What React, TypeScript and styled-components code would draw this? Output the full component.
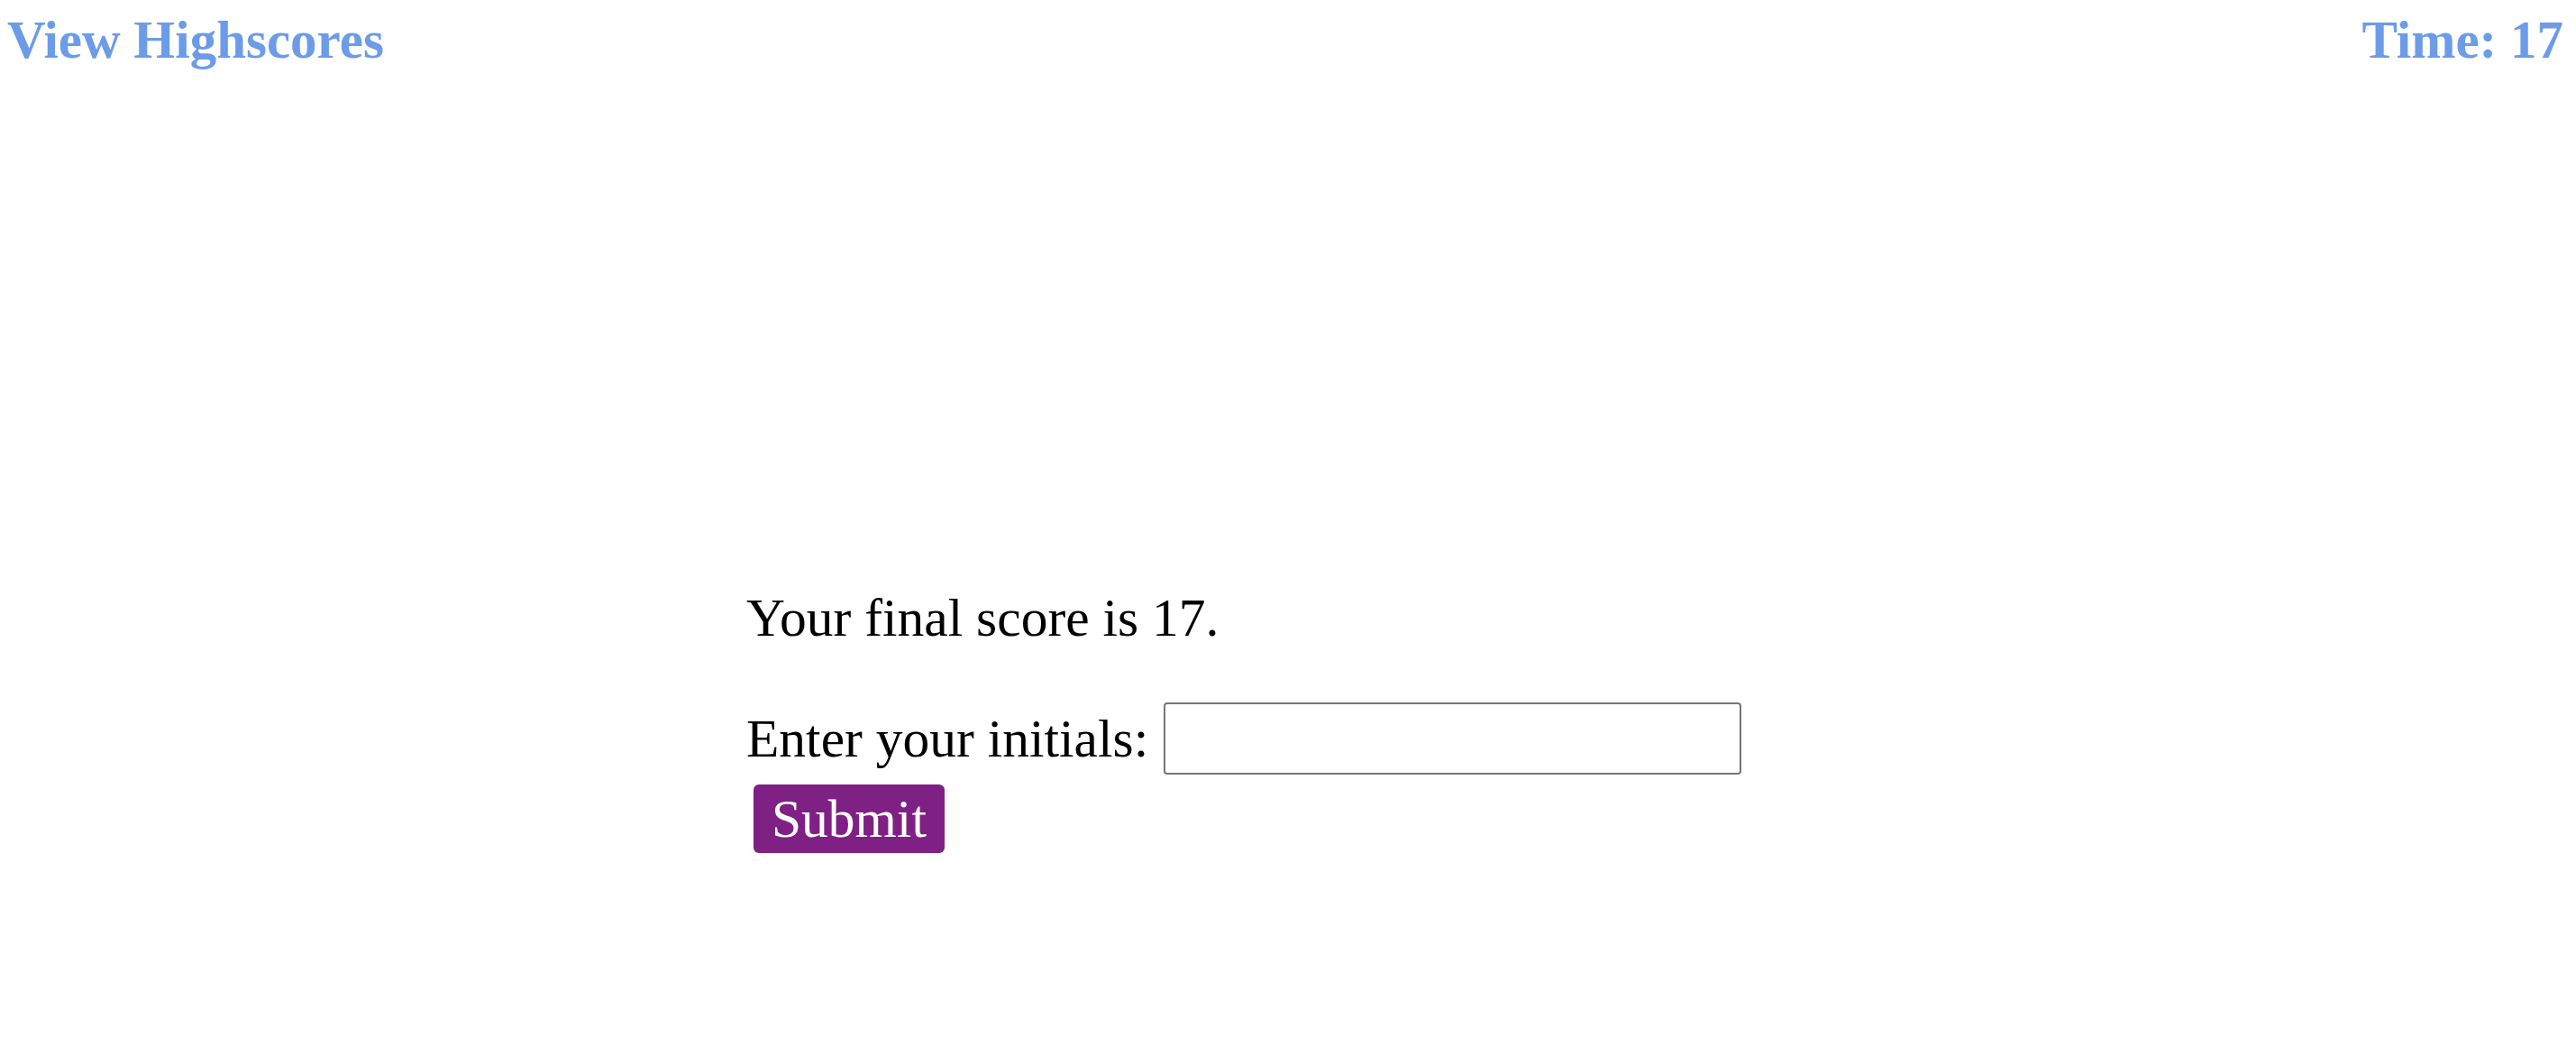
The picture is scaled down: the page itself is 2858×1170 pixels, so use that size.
import React from 'react';
import styled, { createGlobalStyle } from 'styled-components';

const GlobalStyle = createGlobalStyle`
  html, body {
    margin: 0;
    padding: 0;
    background: #ffffff;
  }
  body {
    font-family: "Liberation Serif", "Times New Roman", serif;
    color: #000000;
  }
`;

export default function App() {
  return (
    <>
      <GlobalStyle />
      <Page>
        <Header>
          <HeaderLink href="#">View Highscores</HeaderLink>
          <Timer>Time: 17</Timer>
        </Header>
        <Main>
          <Score>Your final score is 17.</Score>
          <InitialsRow>
            <Label htmlFor="initials">Enter your initials:</Label>
            <InitialsInput id="initials" type="text" />
          </InitialsRow>
          <SubmitButton type="button">Submit</SubmitButton>
        </Main>
      </Page>
    </>
  );
}

const Page = styled.div`
  display: flex;
  flex-direction: column;
  min-height: 1170px;
`;

const Header = styled.header`
  display: flex;
  justify-content: space-between;
  align-items: center;
  padding: 9px 14px 0 8px;
  font-size: 59px;
  line-height: 70px;
  font-weight: 700;
  color: #6c9be8;
`;

const HeaderLink = styled.a`
  color: inherit;
  text-decoration: none;
`;

const Timer = styled.span``;

const Main = styled.main`
  width: 1202px;
  margin: 571px auto 0;
  display: flex;
  flex-direction: column;
  align-items: flex-start;
  font-size: 59.5px;
  line-height: 70px;
`;

const Score = styled.p`
  margin: 0 0 59px;
`;

const InitialsRow = styled.div`
  display: flex;
  align-items: center;
  gap: 17px;
`;

const Label = styled.label``;

const InitialsInput = styled.input`
  box-sizing: border-box;
  width: 641px;
  height: 80px;
  border: 2px solid #767676;
  border-radius: 4px;
  background: #ffffff;
  font: inherit;
  padding: 0 6px;
  outline: none;
`;

const SubmitButton = styled.button`
  margin: 11px 0 0 8px;
  padding: 3px 20px;
  border: none;
  border-radius: 6px;
  background: #7f2084;
  color: #ffffff;
  font-family: "Liberation Serif", "Times New Roman", serif;
  font-size: 59.5px;
  line-height: 70px;
  cursor: pointer;
`;
